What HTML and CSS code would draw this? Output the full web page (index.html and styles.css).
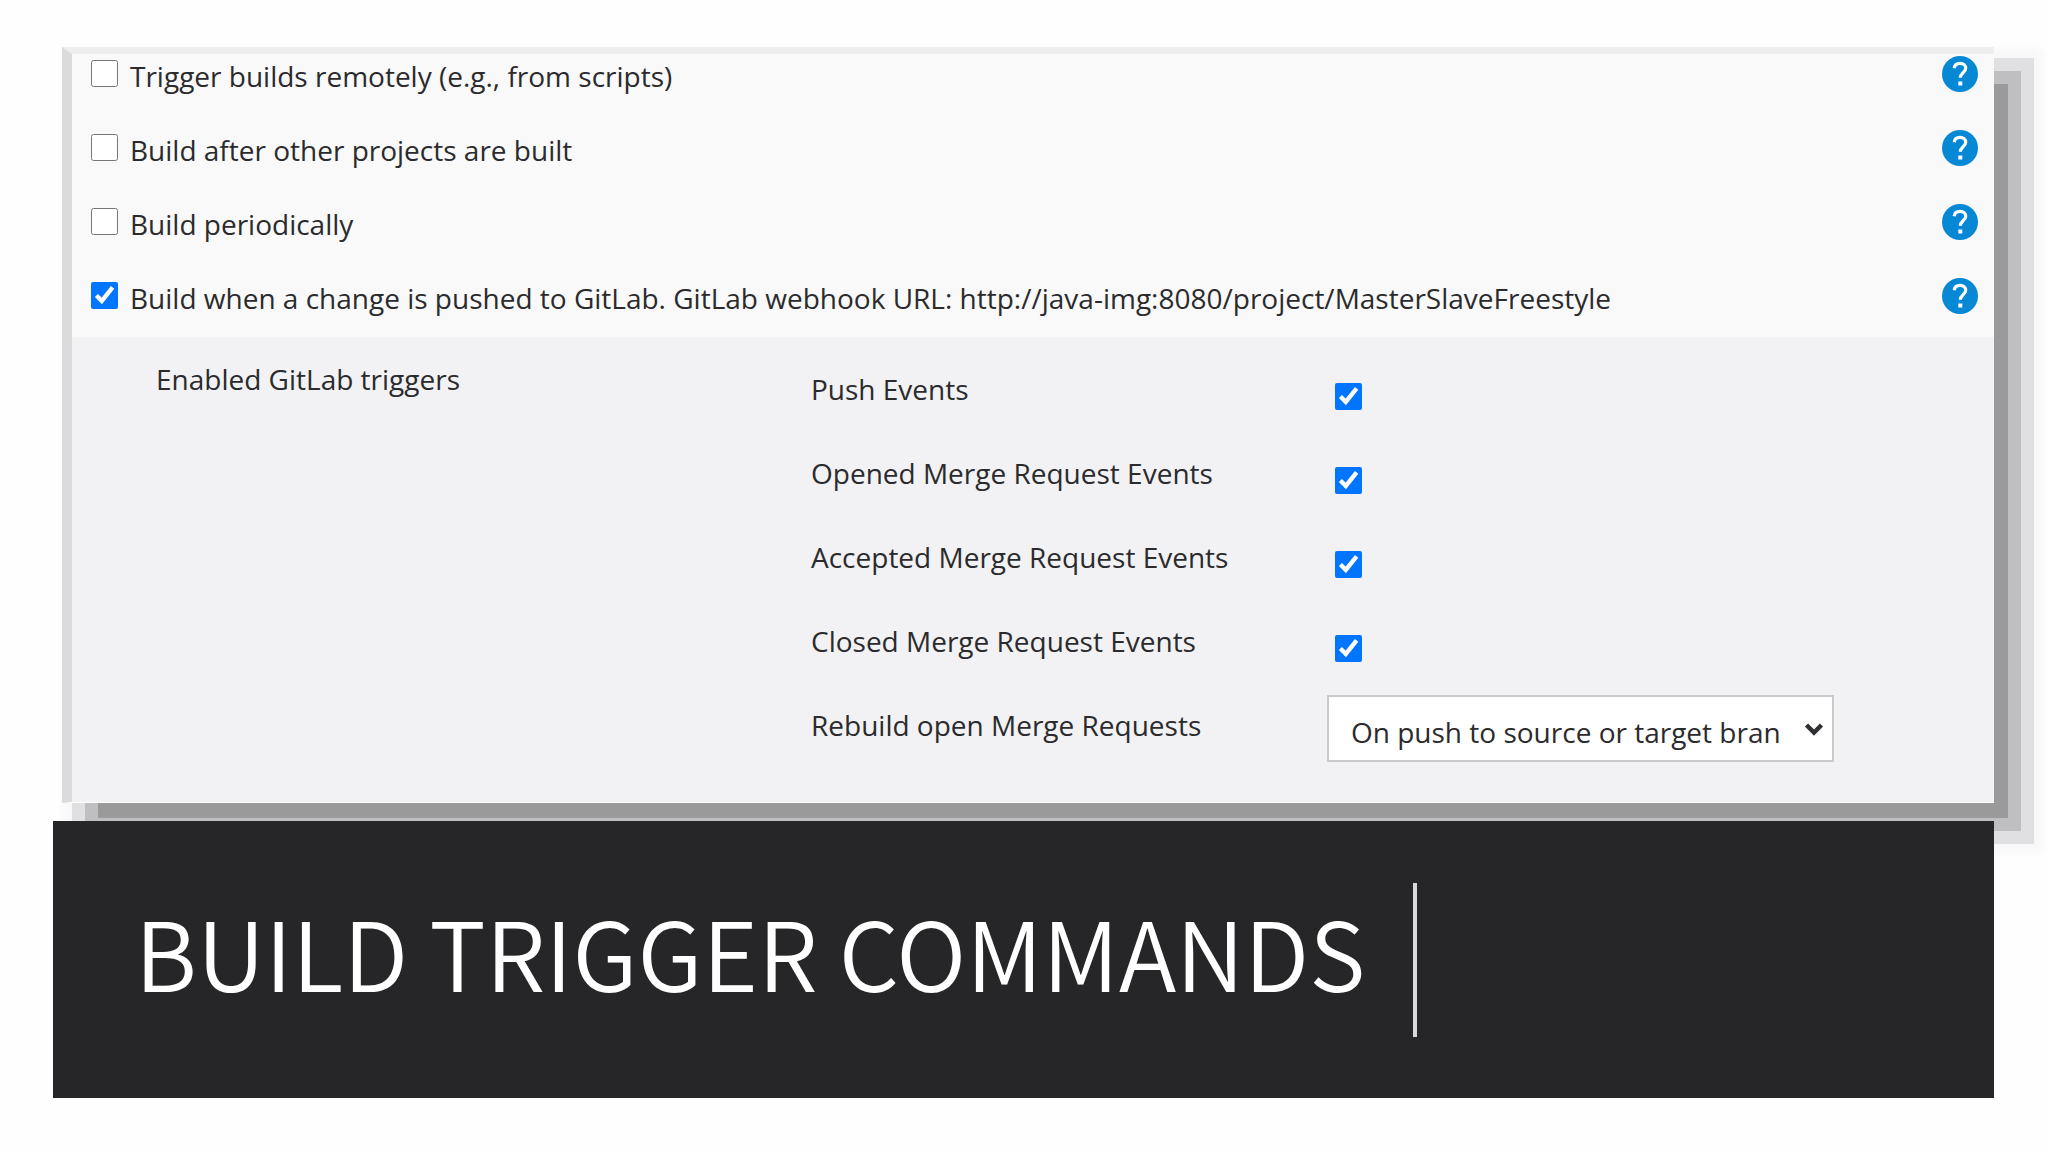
FILE: index.html
```
<!DOCTYPE html>
<html lang="en">
<head>
    <meta charset="UTF-8">
    <meta name="viewport" content="width=device-width, initial-scale=1">
    <title>Build Trigger Commands</title>
    <link rel="stylesheet" href="styles.css">
</head>
<body>

<svg class="sprite" aria-hidden="true">
    <symbol id="help-icon" viewBox="0 0 36 36">
        <circle cx="18" cy="18" r="18" fill="#0788d5"/>
        <path d="M12.2 12.2C12.6 8.7 15 7.3 18 7.3c3.300 0 5.700 1.900 5.700 4.900 0 2.500-1.500 3.700-3 5-1.500 1.300-2.400 2.200-2.400 4.600" fill="none" stroke="#fff" stroke-width="3.200"/>
        <rect x="16.300" y="25.500" width="4" height="4" fill="#fff"/>
    </symbol>
</svg>

<form class="panel">
    <div class="triggers">
        <div class="trigger">
            <input type="checkbox" id="remote">
            <label for="remote">Trigger builds remotely (e.g., from scripts)</label>
            <button type="button" class="help" aria-label="Help"><svg><use href="#help-icon"/></svg></button>
        </div>
        <div class="trigger">
            <input type="checkbox" id="after">
            <label for="after">Build after other projects are built</label>
            <button type="button" class="help" aria-label="Help"><svg><use href="#help-icon"/></svg></button>
        </div>
        <div class="trigger">
            <input type="checkbox" id="periodic">
            <label for="periodic">Build periodically</label>
            <button type="button" class="help" aria-label="Help"><svg><use href="#help-icon"/></svg></button>
        </div>
        <div class="trigger">
            <input type="checkbox" id="gitlab" checked>
            <label for="gitlab">Build when a change is pushed to GitLab. GitLab webhook URL: http://java-img:8080/project/MasterSlaveFreestyle</label>
            <button type="button" class="help" aria-label="Help"><svg><use href="#help-icon"/></svg></button>
        </div>
    </div>

    <div class="gitlab" role="group" aria-labelledby="gitlab-title">
        <div class="gitlab-title" id="gitlab-title">Enabled GitLab triggers</div>
        <div class="events">
            <div class="event">
                <label for="push">Push Events</label>
                <input type="checkbox" id="push" checked>
            </div>
            <div class="event">
                <label for="opened">Opened Merge Request Events</label>
                <input type="checkbox" id="opened" checked>
            </div>
            <div class="event">
                <label for="accepted">Accepted Merge Request Events</label>
                <input type="checkbox" id="accepted" checked>
            </div>
            <div class="event">
                <label for="closed">Closed Merge Request Events</label>
                <input type="checkbox" id="closed" checked>
            </div>
            <div class="event">
                <label for="rebuild">Rebuild open Merge Requests</label>
                <div class="select-box">
                    <select id="rebuild">
                        <option>On push to source or target branch</option>
                        <option>On push to source branch</option>
                        <option>Never</option>
                    </select>
                    <svg class="chevron" viewBox="0 0 20 14"><path d="M2.500 3l7.500 7.500L17.500 3" fill="none" stroke="#303034" stroke-width="4.500"/></svg>
                </div>
            </div>
        </div>
    </div>
</form>

<div class="banner">
    <h1>Build Trigger Commands</h1>
</div>

</body>
</html>
```
FILE: styles.css
```
* {
    box-sizing: border-box;
}

body {
    margin: 0;
    padding: 47px 54px 54px 53px;
    min-height: 100vh;
    display: flex;
    flex-direction: column;
    background-color: #fefefe;
    color: #2b2b2d;
    font-family: "Open Sans", "Noto Sans", sans-serif;
    font-size: 28px;
    line-height: 40px;
}

.sprite {
    position: absolute;
    width: 0;
    height: 0;
}

/* Stepped shadow, darkest layer on top */
.panel {
    margin: 0 0 18px 9px;
    border-left: 10px solid #dbdbdb;
    border-top: 7px solid #eee;
    border-bottom: 1px solid #fff;
    background-color: #f2f2f4;
    box-shadow:
        25px 26px 0 -11px #9a9a9b,
        25px 26px 0 2px #bfbec1,
        25px 26px 0 15px #e0dfe2,
        25px 26px 8px 24px #f8f8f9;
}

.triggers {
    padding: 2px 16px 0 19px;
    background-color: #f9f9fa;
}

.trigger {
    display: flex;
    align-items: flex-start;
    height: 74px;
}

.trigger:last-child {
    height: 59px;
}

input[type="checkbox"] {
    flex: none;
    width: 27px;
    height: 27px;
    margin: 4px 0 0;
}

.trigger label {
    flex: 1;
    margin-left: 12px;
}

.help {
    flex: none;
    width: 36px;
    height: 36px;
    padding: 0;
    border: none;
    background: none;
    cursor: pointer;
}

.help svg {
    display: block;
    width: 36px;
    height: 36px;
}

.gitlab {
    display: grid;
    grid-template-columns: 655fr 1183fr;
    padding: 22px 0 40px 84px;
}

.events {
    display: flex;
    flex-direction: column;
    gap: 17px;
}

.event {
    display: grid;
    grid-template-columns: 516fr 667fr;
    align-items: center;
    height: 67px;
}

.event label {
    padding-bottom: 8px;
}

.event input[type="checkbox"] {
    margin: 8px 0 0 8px;
}

.select-box {
    position: relative;
    width: 76%;
}

select {
    display: block;
    width: 100%;
    height: 67px;
    padding: 6px 50px 0 22px;
    border: 2px solid #c9cacd;
    border-radius: 0;
    appearance: none;
    background-color: #fff;
    color: #2b2b2d;
    font: inherit;
}

.chevron {
    position: absolute;
    right: 10px;
    top: 27px;
    width: 20px;
    height: 14px;
    pointer-events: none;
}

.banner {
    flex: 1;
    display: flex;
    align-items: center;
    padding-left: 82px;
    background-color: #262628;
}

h1 {
    margin: 0;
    padding: 0 48px 18px 0;
    border-right: 4px solid #d9d9d9;
    color: #fff;
    font-family: "Noto Sans CJK SC", "Open Sans", sans-serif;
    font-size: 95px;
    font-weight: 350;
    line-height: 136px;
    text-transform: uppercase;
}
```
